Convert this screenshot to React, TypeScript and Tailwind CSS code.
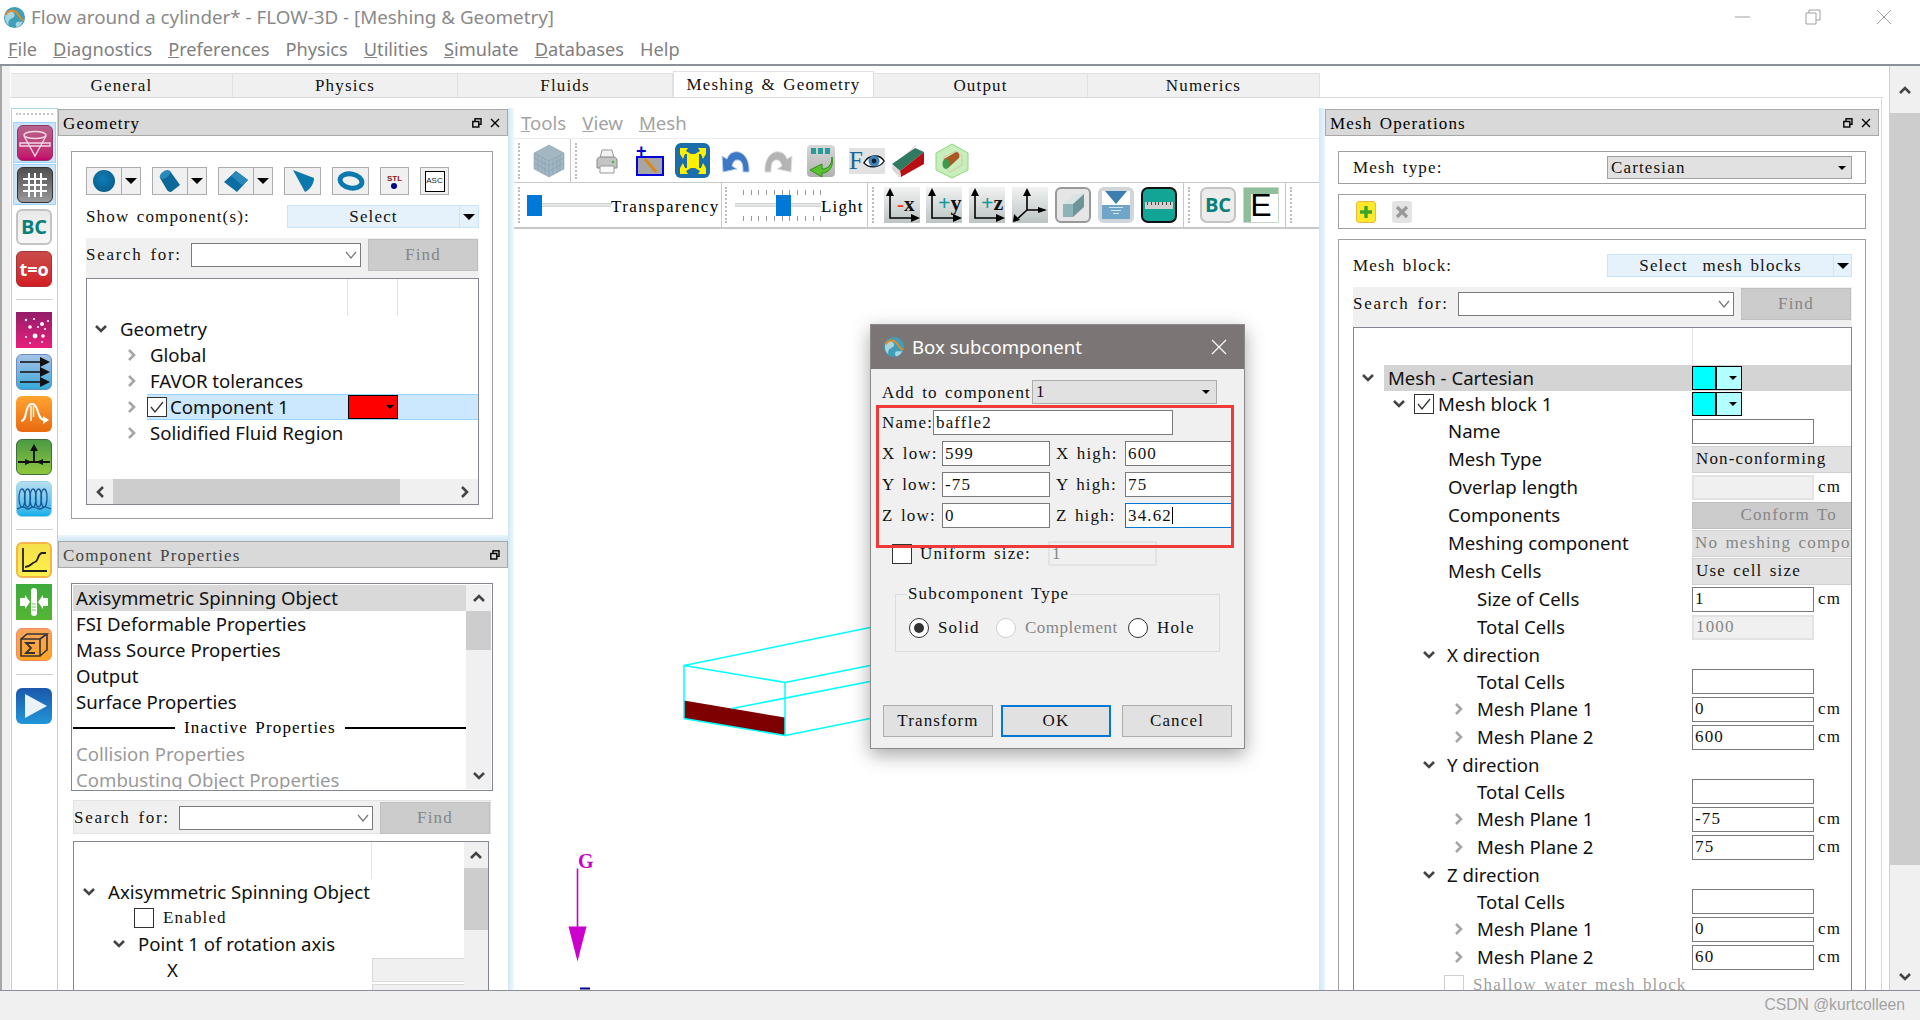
import React from "react";

const noto = "font-['Noto_Sans',sans-serif] text-[18.6px] tracking-normal [word-spacing:0]";
const badge = "font-['Open_Sans',sans-serif] font-bold tracking-normal leading-none";

const Logo = ({ size = 24 }: { size?: number }) => (
  <svg width={size} height={size} viewBox="0 0 24 24" className="shrink-0">
    <circle cx="12" cy="12" r="11" fill="#3f9fb8" />
    <path d="M3 8c3-3 6-3 8-1s1 5-2 6-4 4-3 7C3 18 1 13 3 8z" fill="#a8d5e0" />
    <path d="M14 17c3-1 6 0 7-1-1 3-4 6-7 6-1-2-1-4 0-5z" fill="#a8d5e0" />
    <path d="M3 9c4-6 10-5 13 0 1 2 3 5 6 6" fill="none" stroke="#e58a2c" strokeWidth="2" />
  </svg>
);

const Chev = ({ dir, light }: { dir: "down" | "right" | "up" | "left"; light?: boolean }) => {
  const points = {
    down: "2,4 7,9 12,4",
    up: "2,10 7,5 12,10",
    right: "4,2 9,7 4,12",
    left: "10,2 5,7 10,12",
  }[dir];
  return (
    <svg width="14" height="14" viewBox="0 0 14 14" className="shrink-0">
      <polyline points={points} fill="none" stroke={light ? "#a6a6a6" : "#444"} strokeWidth="2.6" />
    </svg>
  );
};

const Caret = ({ small }: { small?: boolean }) =>
  small ? (
    <span className="w-0 h-0 border-x-[4px] border-x-transparent border-t-[4px] border-t-black" />
  ) : (
    <span className="w-0 h-0 border-x-[6px] border-x-transparent border-t-[6px] border-t-black" />
  );

const ComboCheck = () => (
  <svg width="12" height="12" viewBox="0 0 12 12" className="shrink-0">
    <polyline points="1,3 6,9 11,3" fill="none" stroke="#777" strokeWidth="1.2" />
  </svg>
);

const DockIcon = () => (
  <svg width="10" height="10" viewBox="0 0 10 10">
    <rect x="3" y="0.8" width="6" height="5.5" fill="none" stroke="#000" strokeWidth="1.4" />
    <rect x="0.8" y="3.5" width="6" height="5.5" fill="#d9d9d9" stroke="#000" strokeWidth="1.4" />
  </svg>
);

const DockClose = () => (
  <svg width="10" height="10" viewBox="0 0 10 10">
    <path d="M1 1l8 8M9 1l-8 8" stroke="#000" strokeWidth="1.4" />
  </svg>
);

const DockTitle = ({ title, closable, dim }: { title: string; closable?: boolean; dim?: boolean }) => (
  <div className="h-[27px] flex items-center bg-[#d9d9d9] border border-[#a8a8a8] pl-[4px] shrink-0">
    <span className={`pt-[2px] ${dim ? "text-[#444]" : "text-black"}`}>{title}</span>
    <div className="ml-auto flex items-center gap-[8px] pr-[7px]">
      <DockIcon />
      {closable && <DockClose />}
    </div>
  </div>
);

const Check = ({ on, dim }: { on?: boolean; dim?: boolean }) => (
  <span
    className={`w-[20px] h-[20px] border flex items-center justify-center bg-white shrink-0 ${
      dim ? "border-[#cfcfcf]" : "border-[#333]"
    }`}
  >
    {on && (
      <svg width="14" height="14" viewBox="0 0 14 14">
        <polyline points="1,7 5,12 13,2" fill="none" stroke="#333" strokeWidth="1.3" />
      </svg>
    )}
  </span>
);

const SearchRow = ({ comboW, className }: { comboW: string; className: string }) => (
  <div className={`bg-[#f0f0f0] shrink-0 ${className}`}>
    <div className="h-[32px] flex items-center">
      <span className="shrink-0 w-[105px] whitespace-nowrap tracking-[1.7px]">Search for:</span>
      <div className={`h-[24px] bg-white border border-[#7a7a7a] flex items-center justify-end pr-[3px] shrink-0 ${comboW}`}>
        <ComboCheck />
      </div>
      <div className="ml-[7px] w-[110px] h-[32px] bg-[#cccccc] border border-[#bfbfbf] text-[#868686] flex items-center justify-center shrink-0">
        Find
      </div>
    </div>
  </div>
);

const SplitBtn = ({ children }: { children: React.ReactNode }) => (
  <div className="w-[55px] h-[28px] bg-[#f0f0f0] border border-[#adadad] flex items-center shrink-0">
    <div className="w-[35px] h-full flex items-center justify-center border-r border-[#adadad]">{children}</div>
    <div className="flex-1 flex items-center justify-center">
      <Caret />
    </div>
  </div>
);

const PlainBtn = ({ w, children }: { w: string; children: React.ReactNode }) => (
  <div className={`h-[28px] bg-[#f0f0f0] border border-[#adadad] flex items-center justify-center shrink-0 ${w}`}>{children}</div>
);

const Tile = ({ cls, children }: { cls: string; children?: React.ReactNode }) => (
  <div className={`w-[36px] h-[36px] rounded-[6px] flex items-center justify-center overflow-hidden shrink-0 ${cls}`}>{children}</div>
);

const Rail = () => (
  <div className="w-[47px] ml-px mt-[10px] border-x border-t border-[#a9d6e8] flex flex-col shrink-0 overflow-hidden">
    <div className="mt-[4px] mx-[4px] border-t-2 border-dotted border-[#c8c8c8]" />
    <div className="mt-[7px] ml-[1px] w-[43px] h-[41px] bg-[#cce4f7] border border-[#99d1ff] flex items-center justify-center">
      <Tile cls="bg-linear-to-b from-[#b4628c] to-[#c3006b] border border-[#8a3a68]">
        <svg width="32" height="30" viewBox="0 0 32 30" fill="none" stroke="#f4d8e6" strokeWidth="1.4">
          <ellipse cx="16" cy="7" rx="11" ry="3.5" />
          <path d="M5 8l11 20 11-20" />
          <path d="M1 15h30v3H1z" />
        </svg>
      </Tile>
    </div>
    <div className="mt-px ml-[1px] w-[43px] h-[41px] bg-[#cce4f7] border border-[#99d1ff] flex items-center justify-center">
      <Tile cls="bg-linear-to-b from-[#4f4f4f] to-[#9a9a9a] border border-[#333]">
        <svg width="30" height="30" viewBox="0 0 30 30" stroke="#fff" strokeWidth="2">
          <path d="M3 9h24M3 15h24M3 21h24M9 3v24M15 3v24M21 3v24" />
        </svg>
      </Tile>
    </div>
    <div className="mt-[4px] ml-[4px]">
      <Tile cls="bg-linear-to-b from-[#e9e9e9] to-[#f7f7f7] border-2 border-[#c4c4c4]">
        <span className={`${badge} text-[20px] text-[#0b7f7a]`}>BC</span>
      </Tile>
    </div>
    <div className="mt-[6px] ml-[4px]">
      <Tile cls="bg-linear-to-b from-[#c94a4a] to-[#d21c24] border border-[#a33]">
        <span className={`${badge} text-[18px] text-white`}>t=o</span>
      </Tile>
    </div>
    <div className="mt-[12px] mx-[4px] border-t border-[#d0d0d0]" />
    <div className="mt-[12px] ml-[4px]">
      <Tile cls="bg-linear-to-b from-[#931c68] to-[#ea1c7c] rounded-none">
        <svg width="32" height="32" viewBox="0 0 32 32" fill="#fff">
          <circle cx="8" cy="6" r="1.2" /><circle cx="16" cy="5" r="1" /><circle cx="24" cy="10" r="2" /><circle cx="30" cy="7" r="1" />
          <circle cx="12" cy="13" r="1.8" /><circle cx="20" cy="13" r="1" /><circle cx="27" cy="15" r="1" /><circle cx="8" cy="23" r="1" />
          <circle cx="17" cy="22" r="2.4" /><circle cx="25" cy="22" r="1.8" /><circle cx="12" cy="29" r="1" /><circle cx="24" cy="28" r="1" />
        </svg>
      </Tile>
    </div>
    <div className="mt-[6px] ml-[4px]">
      <Tile cls="bg-linear-to-b from-[#a3c2e6] to-[#2fa9da] border border-[#6a8cc0]">
        <svg width="34" height="32" viewBox="0 0 34 32" fill="#111" stroke="#111" strokeWidth="1.4">
          <path d="M3 6h22M3 16h22M3 26h22" />
          <path d="M23 1l10 5-10 5zM23 11l10 5-10 5zM23 21l10 5-10 5z" stroke="none" />
        </svg>
      </Tile>
    </div>
    <div className="mt-[6px] ml-[4px]">
      <Tile cls="bg-linear-to-b from-[#ffa42f] to-[#e8690f]">
        <svg width="32" height="32" viewBox="0 0 32 32" fill="none" stroke="#fff" strokeWidth="2">
          <path d="M3 23c5 0 4-7 6-12 1-3 3-5 5-5s4 2 5 5c2 5 2 10 7 11" />
          <path d="M13 8v15M15.5 8v11" strokeWidth="1.4" />
          <path d="M25 18l6 4-6 4z" fill="#fff" stroke="none" />
        </svg>
      </Tile>
    </div>
    <div className="mt-[7px] ml-[4px]">
      <Tile cls="bg-linear-to-b from-[#4a9a44] to-[#90c83c] border border-[#3d6f3b]">
        <svg width="34" height="30" viewBox="0 0 34 30" fill="#111" stroke="#111" strokeWidth="1.8">
          <path d="M1 20h32M17 6v14" />
          <path d="M13 9l4-7 4 7zM8 17l7 3-7 3zM26 17l-7 3 7 3z" stroke="none" />
        </svg>
      </Tile>
    </div>
    <div className="mt-[6px] ml-[4px]">
      <Tile cls="bg-linear-to-b from-[#b5dff0] to-[#00afe9] border border-[#9cd0e6]">
        <svg width="34" height="26" viewBox="0 0 34 26" fill="none" stroke="#175a94" strokeWidth="1.3">
          <ellipse cx="5" cy="12" rx="3" ry="9" />
          <ellipse cx="10.5" cy="12" rx="3" ry="9" />
          <ellipse cx="16" cy="12" rx="3" ry="9" />
          <ellipse cx="21.5" cy="12" rx="3" ry="9" />
          <ellipse cx="27" cy="12" rx="3" ry="9" />
          <path d="M0 23c3-1 3-1 5-2s4 2 6 2 4-3 6-2 4 2 6 2 4-3 6-2 3 1 5 2" />
        </svg>
      </Tile>
    </div>
    <div className="mt-[12px] mx-[4px] border-t border-[#d0d0d0]" />
    <div className="mt-[12px] ml-[4px]">
      <Tile cls="bg-linear-to-b from-[#f5e04a] to-[#fdf04a] border-2 border-[#f5b44a]">
        <svg width="30" height="30" viewBox="0 0 30 30" fill="none" stroke="#222" strokeWidth="1.8">
          <path d="M4 3v23h24" />
          <path d="M6 22c6 0 6-4 10-5s2-8 7-9h4" />
        </svg>
      </Tile>
    </div>
    <div className="mt-[6px] ml-[4px]">
      <Tile cls="bg-linear-to-b from-[#3dab3d] to-[#55b534] rounded-none">
        <svg width="32" height="32" viewBox="0 0 32 32" fill="#fff">
          <rect x="13" y="2" width="6" height="28" rx="3" />
          <path d="M2 12h5V9l5 7-5 7v-3H2zM30 12h-5V9l-5 7 5 7v-3h5z" />
          <path d="M14 18h4M14 21h4M14 24h4" stroke="#7cc46b" />
        </svg>
      </Tile>
    </div>
    <div className="mt-[8px] ml-[4px]">
      <Tile cls="bg-linear-to-b from-[#f7a45a] to-[#ffa51d] border border-[#f28a6a] !h-[33px]">
        <svg width="30" height="26" viewBox="0 0 30 26" fill="none" stroke="#333" strokeWidth="1.6">
          <path d="M2 7h19v17H2zM2 7l6-5h20l-7 5M21 24l7-6V2" />
          <path d="M16 11H7l5 5-5 5h9" strokeWidth="1.8" />
        </svg>
      </Tile>
    </div>
    <div className="mt-[13px] mx-[4px] border-t border-[#d0d0d0]" />
    <div className="mt-[13px] ml-[4px]">
      <Tile cls="bg-linear-to-b from-[#1c57ab] to-[#2296d9]">
        <svg width="30" height="30" viewBox="0 0 30 30" fill="#eaf2fa">
          <path d="M6 3l22 12L6 27z" />
        </svg>
      </Tile>
    </div>
  </div>
);

const Sphere = () => (
  <svg width="24" height="24" viewBox="0 0 24 24">
    <defs>
      <radialGradient id="sphereFill" cx="45%" cy="40%" r="60%">
        <stop offset="0%" stopColor="#0f7db5" />
        <stop offset="100%" stopColor="#0a5f8f" />
      </radialGradient>
    </defs>
    <circle cx="12" cy="12" r="11" fill="url(#sphereFill)" />
  </svg>
);

const GeoTools = () => (
  <div className="flex items-center h-[28px] shrink-0">
    <SplitBtn>
      <Sphere />
    </SplitBtn>
    <div className="ml-[11px]">
      <SplitBtn>
        <svg width="24" height="24" viewBox="0 0 24 24">
          <path d="M2 9l10-7 10 14-9 7c-2 0-3-1-4-2z" fill="#0b6899" />
          <ellipse cx="7" cy="5.5" rx="6" ry="3.4" transform="rotate(-35 7 5.5)" fill="#2a88ba" />
        </svg>
      </SplitBtn>
    </div>
    <div className="ml-[11px]">
      <SplitBtn>
        <svg width="26" height="24" viewBox="0 0 26 24">
          <path d="M1 13L13 2l12 9-11 12z" fill="#0a6ea3" />
          <path d="M8 7l5-5 12 9-6 5z" fill="#2a88ba" />
        </svg>
      </SplitBtn>
    </div>
    <div className="ml-[11px]">
      <PlainBtn w="w-[37px]">
        <svg width="24" height="24" viewBox="0 0 24 24">
          <path d="M2 1l21 8c0 5-3 11-9 14z" fill="#0a78ad" />
        </svg>
      </PlainBtn>
    </div>
    <div className="ml-[11px]">
      <PlainBtn w="w-[37px]">
        <svg width="28" height="20" viewBox="0 0 28 20" fill="none">
          <ellipse cx="14" cy="10" rx="11" ry="7" transform="rotate(10 14 10)" stroke="#0b79ae" strokeWidth="5" />
        </svg>
      </PlainBtn>
    </div>
    <div className="ml-[11px]">
      <PlainBtn w="w-[29px]">
        <div className="flex flex-col items-center leading-none tracking-normal font-['Liberation_Sans',sans-serif]">
          <span className="text-[8px] font-bold text-[#8b1a1a] leading-[9px]">STL</span>
          <span className="w-[6px] h-[6px] rounded-full bg-[#00008b]" />
        </div>
      </PlainBtn>
    </div>
    <div className="ml-[11px]">
      <PlainBtn w="w-[29px]">
        <div className="relative w-[20px] h-[21px] border border-black bg-white flex items-center justify-center tracking-normal font-['Liberation_Sans',sans-serif]">
          <span className="text-[8px] text-[#222] leading-none">ASC</span>
        </div>
      </PlainBtn>
    </div>
  </div>
);

const TreeRow = ({ pl, slot, chev, light, children }: { pl: string; slot: string; chev?: "down" | "right"; light?: boolean; children: React.ReactNode }) => (
  <div className={`h-[26px] flex items-center text-[#111] shrink-0 whitespace-nowrap ${noto} ${pl}`}>
    <span className={`flex items-center shrink-0 ${slot}`}>{chev && <Chev dir={chev} light={light} />}</span>
    {children}
  </div>
);

const GeometryPanel = () => (
  <div className="ml-[13px] mt-[15px] w-[422px] h-[368px] border border-[#a0a0a0] pl-[14px] pt-[15px] flex flex-col shrink-0">
    <GeoTools />
    <div className="mt-[10px] h-[23px] flex items-center w-[393px] shrink-0">
      <span className="w-[201px] shrink-0 pt-[1px] whitespace-nowrap">Show component(s):</span>
      <div className="flex-1 h-full bg-[#e5f1fb] border border-[#cce4f7] flex items-center">
        <span className="flex-1 text-center">Select</span>
        <span className="w-[19px] h-full border-l border-[#cce4f7] flex items-center justify-center">
          <Caret />
        </span>
      </div>
    </div>
    <SearchRow comboW="w-[170px]" className="mt-[10px] h-[40px] w-[393px] pt-[1px]" />
    <div className="w-[393px] h-[227px] border border-[#828790] flex flex-col shrink-0">
      <div className="h-[37px] ml-[260px] w-[51px] border-x border-[#e3e3e3] shrink-0" />
      <TreeRow pl="pl-[7px]" slot="w-[26px]" chev="down">Geometry</TreeRow>
      <TreeRow pl="pl-[38px]" slot="w-[25px]" chev="right" light>Global</TreeRow>
      <TreeRow pl="pl-[38px]" slot="w-[25px]" chev="right" light>FAVOR tolerances</TreeRow>
      <div className={`h-[26px] flex items-center text-[#111] pl-[38px] shrink-0 ${noto}`}>
        <span className="flex items-center w-[22px] shrink-0">
          <Chev dir="right" light />
        </span>
        <div className="flex-1 h-full bg-[#cce8ff] border-y border-[#99d1ff] flex items-center">
          <Check on />
          <span className="ml-[3px] w-[178px] shrink-0">Component 1</span>
          <div className="w-[50px] h-[24px] bg-[#ff0000] border border-black flex items-center justify-end pr-[3px]">
            <Caret small />
          </div>
        </div>
      </div>
      <TreeRow pl="pl-[38px]" slot="w-[25px]" chev="right" light>Solidified Fluid Region</TreeRow>
      <div className="mt-auto h-[25px] bg-[#f0f0f0] flex items-center shrink-0">
        <span className="w-[26px] flex justify-center">
          <Chev dir="left" />
        </span>
        <div className="w-[287px] h-full bg-[#cdcdcd]" />
        <span className="ml-auto w-[26px] flex justify-center">
          <Chev dir="right" />
        </span>
      </div>
    </div>
  </div>
);

const ListItem = ({ children, dim, on }: { children: React.ReactNode; dim?: boolean; on?: boolean }) => (
  <div
    className={`h-[26px] flex items-center pl-[3px] shrink-0 whitespace-nowrap ${noto} ${on ? "bg-[#d9d9d9]" : ""} ${
      dim ? "text-[#9a9a9a]" : "text-[#111]"
    }`}
  >
    {children}
  </div>
);

const ComponentPanel = () => (
  <>
    <div className="ml-[13px] mt-[15px] w-[422px] h-[208px] border border-[#828790] flex p-px shrink-0">
      <div className="w-[393px] flex flex-col overflow-hidden">
        <ListItem on>Axisymmetric Spinning Object</ListItem>
        <ListItem>FSI Deformable Properties</ListItem>
        <ListItem>Mass Source Properties</ListItem>
        <ListItem>Output</ListItem>
        <ListItem>Surface Properties</ListItem>
        <div className="h-[26px] flex items-center shrink-0">
          <div className="w-[102px] border-t-2 border-black" />
          <span className="mx-[9px] text-black whitespace-nowrap">Inactive Properties</span>
          <div className="flex-1 border-t-2 border-black" />
        </div>
        <ListItem dim>Collision Properties</ListItem>
        <ListItem dim>Combusting Object Properties</ListItem>
      </div>
      <div className="flex-1 bg-[#f0f0f0] flex flex-col items-center">
        <span className="h-[26px] flex items-center">
          <Chev dir="up" />
        </span>
        <div className="w-full h-[39px] bg-[#cdcdcd]" />
        <span className="mt-auto h-[26px] flex items-center">
          <Chev dir="down" />
        </span>
      </div>
    </div>
    <SearchRow comboW="w-[194px]" className="ml-[15px] mt-[9px] h-[34px] w-[418px] border border-[#e3e3e3] pt-[1px]" />
    <div className="ml-[15px] mt-[7px] w-[416px] flex-1 min-h-0 border-x border-t border-[#828790] flex overflow-hidden">
      <div className="w-[390px] flex flex-col">
        <div className="h-[37px] ml-[297px] w-px bg-[#e3e3e3] shrink-0" />
        <TreeRow pl="pl-[8px]" slot="w-[26px]" chev="down">Axisymmetric Spinning Object</TreeRow>
        <div className="h-[26px] flex items-center pl-[60px] gap-[9px] shrink-0">
          <Check />
          <span>Enabled</span>
        </div>
        <TreeRow pl="pl-[38px]" slot="w-[26px]" chev="down">Point 1 of rotation axis</TreeRow>
        <div className={`h-[26px] flex items-center text-[#111] pl-[93px] shrink-0 ${noto}`}>
          <span className="w-[205px]">X</span>
          <div className="w-[92px] h-[24px] bg-[#f0f0f0] border border-[#d9d9d9] border-r-0" />
        </div>
        <div className="h-[26px] flex items-center pl-[298px] shrink-0">
          <div className="w-[92px] h-[24px] bg-[#f0f0f0] border border-[#d9d9d9] border-r-0" />
        </div>
      </div>
      <div className="flex-1 bg-[#f0f0f0] flex flex-col items-center">
        <span className="h-[26px] flex items-center">
          <Chev dir="up" />
        </span>
        <div className="w-full h-[62px] bg-[#cdcdcd]" />
      </div>
    </div>
  </>
);

const LeftDock = () => (
  <div className="w-[450px] mt-[11px] flex flex-col shrink-0 min-h-0">
    <DockTitle title="Geometry" closable />
    <GeometryPanel />
    <div className="h-[22px] flex flex-col justify-end shrink-0">
      <div className="h-[6px] bg-linear-to-b from-[#eaf5fb] to-[#cfe8f4]" />
    </div>
    <DockTitle title="Component Properties" dim />
    <ComponentPanel />
  </div>
);

const Grip = ({ cls }: { cls: string }) => <span className={`h-[36px] border-l-2 border-dotted border-[#bdbdbd] shrink-0 ${cls}`} />;
const Sep = ({ cls }: { cls: string }) => <span className={`self-stretch w-px bg-[#c8c8c8] shrink-0 ${cls}`} />;

const ToolbarTop = () => (
  <div className="h-[45px] flex items-center border-t border-[#ececec] border-b border-b-[#c8c8c8] shrink-0">
    <Grip cls="ml-[4px]" />
    <svg width="32" height="34" viewBox="0 0 32 34" className="ml-[13px] shrink-0" stroke="#7f9aac" strokeWidth="0.5">
      <path d="M16 1l15 8v16l-15 8-15-8V9z" fill="#a3b6c2" />
      <path d="M1 9l15 8 15-8M16 17v16M5 11v16M9 13v16M12 15v16M20 15v16M24 13v16M27 11v16M1 14l15 8 15-8M1 19l15 8 15-8" fill="none" />
    </svg>
    <Sep cls="ml-[5px]" />
    <Grip cls="ml-[4px]" />
    <svg width="26" height="26" viewBox="0 0 26 26" className="ml-[17px] shrink-0">
      <path d="M8 2h10l2 8H6z" fill="#f2f2f2" stroke="#999" />
      <path d="M3 12c0-2 2-3 4-3h12c2 0 4 1 4 3v8H3z" fill="#c4c4c4" stroke="#888" />
      <path d="M6 18h14v7H6z" fill="#fafafa" stroke="#999" />
      <circle cx="19" cy="14" r="1.3" fill="#4caf50" />
    </svg>
    <div className="ml-[16px] w-[28px] h-[30px] flex flex-col shrink-0">
      <span className="h-[11px] text-[#0000d0] text-[18px] font-bold leading-[10px] tracking-normal font-['Liberation_Sans',sans-serif]">+</span>
      <div className="flex-1 bg-[#a6a6a6] border-2 border-[#0000e0] flex items-center justify-center">
        <svg width="18" height="16" viewBox="0 0 18 16">
          <path d="M4 1l11 13" stroke="#d98a1e" strokeWidth="3" />
        </svg>
      </div>
    </div>
    <div className="ml-[11px] w-[35px] h-[35px] rounded-[6px] bg-[#1b6dab] flex items-center justify-center shrink-0">
      <svg width="30" height="30" viewBox="0 0 30 30">
        <path d="M9 8h12v14H9z" fill="#ffef00" />
        <path d="M2 2h8l-2 3 5 3H7L5 13 2 8zM28 2h-8l2 3-5 3h6l2 5 3-5zM2 28h8l-2-3 5-3H7l-2-5-3 5zM28 28h-8l2-3-5-3h6l2-5 3 5z" fill="#ffef00" />
      </svg>
    </div>
    <svg width="32" height="26" viewBox="0 0 32 26" className="ml-[10px] shrink-0">
      <path d="M29 24C30 10 22 2 14 4 10 5 8 8 7 11L2 8l1 16 14-3-5-3c1-3 2-6 5-6 5 0 6 4 6 12z" fill="#3d78c4" stroke="#bcd0ea" />
    </svg>
    <svg width="32" height="26" viewBox="0 0 32 26" className="ml-[10px] shrink-0">
      <path d="M3 24C2 10 10 2 18 4c4 1 6 4 7 7l5-3-1 16-14-3 5-3c-1-3-2-6-5-6-5 0-6 4-6 12z" fill="#b4b4b4" stroke="#e0e0e0" />
    </svg>
    <div className="ml-[13px] w-[28px] h-[32px] rounded-[4px] bg-linear-to-b from-[#d8d8d8] to-[#b0b0b0] relative shrink-0">
      <div className="pt-[3px] pl-[4px] flex gap-[2px]">
        <span className="w-[5px] h-[6px] bg-[#2a9a9a]" />
        <span className="w-[5px] h-[6px] bg-[#2a9a9a]" />
        <span className="w-[5px] h-[6px] bg-[#2a9a9a]" />
      </div>
      <svg width="28" height="22" viewBox="0 0 28 22" className="absolute left-0 bottom-0">
        <path d="M25 2c0 9-5 12-10 12v-5L3 15l12 7v-4c7 0 12-6 10-16z" fill="#58c22e" stroke="#2f8f1a" />
      </svg>
    </div>
    <div className="ml-[14px] w-[36px] h-[26px] flex items-center bg-[#e2e2e2] shrink-0">
      <span className="font-['Liberation_Serif',serif] text-[25px] leading-none tracking-normal text-[#14699a]">F</span>
      <svg width="24" height="20" viewBox="0 0 24 20">
        <path d="M1 12C6 3 18 2 23 10 18 18 6 18 1 12z" fill="#fff" stroke="#111" strokeWidth="1.5" />
        <circle cx="12" cy="10" r="6" fill="#3f83b8" />
        <circle cx="12" cy="10" r="2.6" fill="#0c2030" />
      </svg>
    </div>
    <svg width="36" height="34" viewBox="0 0 36 34" className="ml-[5px] shrink-0">
      <path d="M26 1L2 24l7 9 25-21" fill="none" stroke="#f2a8a8" strokeWidth="0.6" />
      <path d="M2 20L25 4l9 4L10 27z" fill="#2f7a60" />
      <path d="M10 27L34 8v12L11 33z" fill="#b80f14" />
      <path d="M2 20l8 7 1 6-8-6z" fill="#d8d8d8" />
    </svg>
    <svg width="36" height="36" viewBox="0 0 36 36" className="ml-[8px] shrink-0">
      <path d="M18 1l16 9v17l-16 8-16-8V10z" fill="#c6efbc" stroke="#8fd580" />
      <path d="M10 14l12-6 6 5v9l-12 7-6-5z" fill="none" stroke="#f0a0a0" strokeWidth="0.6" />
      <path d="M10 16l12-7c3 0 4 3 3 6L14 25c-3 1-5-6-4-9z" fill="#a85a22" />
      <ellipse cx="12" cy="21" rx="3.5" ry="5" fill="#3c9a50" />
    </svg>
  </div>
);

const Axis = ({ cls, children }: { cls: string; children?: React.ReactNode }) => (
  <div className={`w-[36px] h-[36px] bg-linear-to-b from-[#f2f2f2] to-[#bcc4c4] relative shrink-0 tracking-normal ${cls}`}>
    <svg width="36" height="36" viewBox="0 0 36 36" className="absolute inset-0">
      <path d="M6 4v27h24" fill="none" stroke="#000" strokeWidth="1.6" />
      <path d="M2 9l4-8 4 8zM27 27l9 4-9 4z" fill="#000" />
    </svg>
    {children}
  </div>
);

const TickRow = () => (
  <div className="flex gap-[7px] pl-[8px] h-[5px] shrink-0">
    {[0, 1, 2, 3, 4, 5, 6, 7, 8, 9, 10].map((n) => (
      <span key={n} className="w-px h-full bg-[#999]" />
    ))}
  </div>
);

const ToolbarBottom = () => (
  <div className="h-[46px] flex items-center border-b-2 border-[#c8c8c8] shrink-0">
    <Grip cls="ml-[4px]" />
    <div className="ml-[7px] w-[84px] h-[21px] flex items-center shrink-0">
      <span className="w-[15px] h-[21px] bg-[#0078d7] shrink-0" />
      <span className="flex-1 h-[4px] bg-[#e3e6e6] border-y border-[#d4d4d4]" />
    </div>
    <span className="whitespace-nowrap w-[110px] pt-[3px] text-black tracking-[1.4px] shrink-0">Transparency</span>
    <Sep cls="" />
    <Grip cls="ml-[3px]" />
    <div className="ml-[8px] w-[86px] h-[31px] flex flex-col justify-between shrink-0">
      <TickRow />
      <div className="flex items-center h-[21px] -my-[5px] relative">
        <span className="w-full h-[4px] bg-[#e3e6e6] border-y border-[#d4d4d4]" />
        <span className="absolute left-[41px] w-[15px] h-[21px] bg-[#0078d7]" />
      </div>
      <TickRow />
    </div>
    <span className="text-black whitespace-nowrap w-[46px] pt-[3px] shrink-0">Light</span>
    <Sep cls="" />
    <Grip cls="ml-[4px]" />
    <Axis cls="ml-[10px]">
      <span className="absolute left-[13px] top-[7px] font-['Liberation_Serif',serif] font-bold text-[21px] leading-none whitespace-nowrap">
        <span className="text-[#ff3b14]">-</span>x
      </span>
    </Axis>
    <Axis cls="ml-[6px]">
      <span className="absolute left-[12px] top-[5px] font-['Liberation_Serif',serif] font-bold text-[22px] leading-none whitespace-nowrap">
        <span className="text-[#0f9a9a]">+</span>y
      </span>
    </Axis>
    <Axis cls="ml-[7px]">
      <span className="absolute left-[12px] top-[5px] font-['Liberation_Serif',serif] font-bold text-[22px] leading-none whitespace-nowrap">
        <span className="text-[#0f9a9a]">+</span>z
      </span>
    </Axis>
    <div className="ml-[7px] w-[36px] h-[36px] bg-linear-to-b from-[#f2f2f2] to-[#bcc4c4] shrink-0">
      <svg width="36" height="36" viewBox="0 0 36 36">
        <path d="M15 6v17l18 0M15 23L3 34" fill="none" stroke="#000" strokeWidth="1.6" />
        <path d="M11 9l4-8 4 8zM26 20l9 3-9 3zM2 27l-1 8 7-2z" fill="#000" />
      </svg>
    </div>
    <div className="ml-[7px] w-[36px] h-[36px] rounded-[6px] bg-[#e6e6e6] border-2 border-[#999] flex items-center justify-center shrink-0">
      <svg width="28" height="28" viewBox="0 0 28 28">
        <path d="M4 13L15 3h10L14 13z" fill="#d8e4e4" />
        <path d="M14 13L25 3v13L14 26z" fill="#6f9498" />
        <path d="M4 13h10v13H4z" fill="#8fb4b8" />
      </svg>
    </div>
    <div className="ml-[7px] w-[36px] h-[36px] rounded-[6px] bg-[#cfd5d9] flex items-center justify-center shrink-0">
      <div className="w-[28px] h-[28px] bg-white flex flex-col items-center">
        <span className="w-0 h-0 border-x-[11px] border-x-transparent border-t-[13px] border-t-[#3a7fb0]" />
        <div className="mt-px w-full flex-1 bg-[#6fa5c8] flex flex-col items-center gap-[2px] pt-[2px]">
          <span className="w-[14px] h-px bg-[#d5e5f0]" />
          <span className="w-[10px] h-px bg-[#d5e5f0]" />
          <span className="w-[6px] h-px bg-[#d5e5f0]" />
        </div>
      </div>
    </div>
    <div className="ml-[7px] w-[36px] h-[36px] rounded-[7px] bg-[#12a596] border-2 border-[#111] flex items-center justify-center shrink-0">
      <div className="w-[28px] h-[7px] bg-[#d0d0d0] flex items-start justify-between px-[2px]">
        {[0, 1, 2, 3, 4, 5, 6].map((n) => (
          <span key={n} className="w-px h-[3px] bg-[#444]" />
        ))}
      </div>
    </div>
    <Sep cls="ml-[6px]" />
    <Grip cls="ml-[4px]" />
    <div className="ml-[10px] w-[36px] h-[36px] rounded-[7px] bg-[#ececec] border-2 border-[#c4c4c4] flex items-center justify-center shrink-0">
      <span className={`${badge} text-[20px] text-[#0b7f7a]`}>BC</span>
    </div>
    <div className="ml-[7px] w-[36px] h-[36px] bg-white border border-[#c8d8c8] relative shrink-0 flex items-center justify-center">
      <span className="absolute left-0 top-0 w-[7px] h-full bg-[#8fbf9a]" />
      <span className="absolute left-0 top-0 w-full h-[6px] bg-[#8fbf9a]" />
      <span className="relative font-['Liberation_Sans',sans-serif] text-[32px] leading-none tracking-normal text-black">E</span>
    </div>
    <Sep cls="ml-[6px]" />
    <Grip cls="ml-[4px]" />
  </div>
);

const Center = () => (
  <div className="w-[805px] flex flex-col shrink-0 min-h-0">
    <div className={`h-[40px] flex items-center gap-[16px] pl-[7px] pt-[9px] text-[#a3a3a3] shrink-0 ${noto}`}>
      <span><span className="underline">T</span>ools</span>
      <span><span className="underline">V</span>iew</span>
      <span><span className="underline">M</span>esh</span>
    </div>
    <ToolbarTop />
    <ToolbarBottom />
    <div className="relative flex-1 min-h-0 overflow-hidden">
      <svg viewBox="514 230 805 760" className="absolute inset-0 w-full h-full">
        <polygon points="684,701 785,718 785,736 684,719" fill="#7f0000" />
        <g fill="none" stroke="#00ffff" strokeWidth="1.5">
          <path d="M684 666L785 683L785 736L684 719ZM684 666L880 626M785 683L880 664M785 736L880 717M732 709L880 680" />
        </g>
        <path d="M577.5 869V930" stroke="#cc00cc" strokeWidth="1.6" />
        <path d="M568.5 927H586.5L577.5 962Z" fill="#cc00cc" />
        <text x="578" y="868" fontFamily="Liberation Serif, serif" fontWeight="700" fontSize="20" fill="#cc00cc">G</text>
        <rect x="580" y="988" width="10" height="2" fill="#00008b" />
      </svg>
    </div>
  </div>
);

type Kind = "input" | "input-cm" | "off-cm" | "off" | "bar" | "dimbar" | "btn" | "none";

interface Row {
  label: string;
  h: string;
  pl: string;
  slot?: "down" | "right";
  kind: Kind;
  value?: string;
}

const meshRows: Row[] = [
  { label: "Name", h: "h-[28px]", pl: "pl-[94px]", kind: "input" },
  { label: "Mesh Type", h: "h-[28px]", pl: "pl-[94px]", kind: "bar", value: "Non-conforming" },
  { label: "Overlap length", h: "h-[28px]", pl: "pl-[94px]", kind: "off-cm" },
  { label: "Components", h: "h-[28px]", pl: "pl-[94px]", kind: "btn", value: "Conform To" },
  { label: "Meshing component", h: "h-[28px]", pl: "pl-[94px]", kind: "dimbar", value: "No meshing component" },
  { label: "Mesh Cells", h: "h-[28px]", pl: "pl-[94px]", kind: "bar", value: "Use cell size" },
  { label: "Size of Cells", h: "h-[28px]", pl: "pl-[123px]", kind: "input-cm", value: "1" },
  { label: "Total Cells", h: "h-[28px]", pl: "pl-[123px]", kind: "off", value: "1000" },
  { label: "X direction", h: "h-[27px]", pl: "pl-[68px]", slot: "down", kind: "none" },
  { label: "Total Cells", h: "h-[27px]", pl: "pl-[123px]", kind: "input" },
  { label: "Mesh Plane 1", h: "h-[28px]", pl: "pl-[98px]", slot: "right", kind: "input-cm", value: "0" },
  { label: "Mesh Plane 2", h: "h-[28px]", pl: "pl-[98px]", slot: "right", kind: "input-cm", value: "600" },
  { label: "Y direction", h: "h-[27px]", pl: "pl-[68px]", slot: "down", kind: "none" },
  { label: "Total Cells", h: "h-[27px]", pl: "pl-[123px]", kind: "input" },
  { label: "Mesh Plane 1", h: "h-[28px]", pl: "pl-[98px]", slot: "right", kind: "input-cm", value: "-75" },
  { label: "Mesh Plane 2", h: "h-[28px]", pl: "pl-[98px]", slot: "right", kind: "input-cm", value: "75" },
  { label: "Z direction", h: "h-[27px]", pl: "pl-[68px]", slot: "down", kind: "none" },
  { label: "Total Cells", h: "h-[27px]", pl: "pl-[123px]", kind: "input" },
  { label: "Mesh Plane 1", h: "h-[28px]", pl: "pl-[98px]", slot: "right", kind: "input-cm", value: "0" },
  { label: "Mesh Plane 2", h: "h-[28px]", pl: "pl-[98px]", slot: "right", kind: "input-cm", value: "60" },
];

const MeshValue = ({ row }: { row: Row }) => {
  switch (row.kind) {
    case "input":
      return <div className="w-[122px] h-[25px] bg-white border border-[#7a7a7a]" />;
    case "input-cm":
      return (
        <>
          <div className="w-[122px] h-[25px] bg-white border border-[#7a7a7a] flex items-center pl-[2px]">{row.value}</div>
          <span className="ml-[4px]">cm</span>
        </>
      );
    case "off-cm":
      return (
        <>
          <div className="w-[122px] h-[25px] bg-[#f0f0f0] border-2 border-[#e3e3e3]" />
          <span className="ml-[4px]">cm</span>
        </>
      );
    case "off":
      return <div className="w-[122px] h-[25px] bg-[#f0f0f0] border-2 border-[#e3e3e3] flex items-center pl-[2px] text-[#868686]">{row.value}</div>;
    case "bar":
      return <div className="w-full h-[27px] bg-[#e1e1e1] border border-[#d0d0d0] border-r-0 flex items-center pl-[3px] whitespace-nowrap overflow-hidden">{row.value}</div>;
    case "dimbar":
      return <div className="w-full h-[27px] bg-[#e1e1e1] border-y border-[#d0d0d0] flex items-center pl-[3px] text-[#868686] whitespace-nowrap overflow-hidden">{row.value}</div>;
    case "btn":
      return <div className="w-full h-[27px] bg-[#cccccc] border border-[#bfbfbf] border-r-0 flex items-center justify-end pr-[14px] text-[#868686]">{row.value}</div>;
    default:
      return null;
  }
};

const Swatch = () => (
  <div className="w-[50px] h-[24px] border border-black flex shrink-0">
    <span className="w-[24px] bg-[#00ffff] border-r-2 border-black" />
    <span className="flex-1 bg-[#b3ffff] flex items-center justify-end pr-[4px]">
      <Caret small />
    </span>
  </div>
);

const MeshTree = () => (
  <div className="flex-1 min-h-0 w-[499px] border-x border-t border-[#828790] flex flex-col overflow-hidden">
    <div className="h-[37px] ml-[338px] w-px bg-[#e3e3e3] shrink-0" />
    <div className={`h-[26px] flex items-center text-[#111] shrink-0 ${noto}`}>
      <span className="w-[30px] pl-[7px] shrink-0 flex items-center">
        <Chev dir="down" />
      </span>
      <div className="flex-1 h-full bg-[#d4d4d4] flex items-center">
        <span className="w-[308px] pl-[4px] shrink-0">Mesh - Cartesian</span>
        <Swatch />
      </div>
    </div>
    <div className={`h-[26px] flex items-center text-[#111] pl-[38px] shrink-0 ${noto}`}>
      <span className="w-[22px] shrink-0 flex items-center">
        <Chev dir="down" />
      </span>
      <Check on />
      <span className="ml-[4px] w-[254px] shrink-0">Mesh block 1</span>
      <Swatch />
    </div>
    {meshRows.map((row, i) => (
      <div key={i} className={`flex items-center shrink-0 ${row.h}`}>
        <div className={`w-[338px] flex items-center text-[#111] whitespace-nowrap shrink-0 ${noto} ${row.pl}`}>
          {row.slot && (
            <span className="w-[25px] flex items-center shrink-0">
              <Chev dir={row.slot} light={row.slot === "right"} />
            </span>
          )}
          {row.label}
        </div>
        <div className="flex-1 min-w-0 flex items-center">
          <MeshValue row={row} />
        </div>
      </div>
    ))}
    <div className="h-[28px] flex items-center pl-[90px] gap-[9px] text-[#a0a0a0] shrink-0 whitespace-nowrap">
      <Check dim />
      <span>Shallow water mesh block</span>
    </div>
  </div>
);

const RightDock = () => (
  <div className="w-[563px] flex shrink-0 min-h-0 border-r border-[#d9d9d9]">
    <div className="w-[6px] mt-[10px] bg-linear-to-r from-[#cfe8f4] to-[#eaf5fb] shrink-0" />
    <div className="flex-1 flex flex-col mt-[11px] min-h-0">
      <div className="mr-[2px]">
        <DockTitle title="Mesh Operations" closable />
      </div>
      <div className="ml-[13px] mt-[15px] w-[528px] h-[33px] border border-[#a0a0a0] flex items-center pl-[14px] shrink-0">
        <span className="w-[254px] shrink-0 pt-[1px]">Mesh type:</span>
        <div className="w-[245px] h-[23px] bg-[#e1e1e1] border border-[#a0a0a0] flex items-center pl-[3px]">
          Cartesian
          <span className="ml-auto mr-[5px] flex">
            <Caret small />
          </span>
        </div>
      </div>
      <div className="ml-[13px] mt-[10px] w-[528px] h-[35px] border border-[#a0a0a0] flex items-center pl-[17px] gap-[16px] shrink-0">
        <div className="w-[20px] h-[22px] rounded-[3px] bg-[#ffe92a] border border-[#f0b840] flex items-center justify-center">
          <svg width="14" height="14" viewBox="0 0 14 14">
            <path d="M7 1v12M1 7h12" stroke="#3aa52a" strokeWidth="3.4" />
          </svg>
        </div>
        <div className="w-[20px] h-[22px] rounded-[3px] bg-[#e3e3e3] flex items-center justify-center">
          <svg width="14" height="14" viewBox="0 0 14 14">
            <path d="M2 2l10 10M12 2L2 12" stroke="#999" strokeWidth="3.2" />
          </svg>
        </div>
      </div>
      <div className="ml-[13px] mt-[10px] w-[528px] flex-1 min-h-0 border-x border-t border-[#a0a0a0] pl-[14px] pt-[14px] flex flex-col">
        <div className="h-[23px] flex items-center w-[499px] shrink-0">
          <span className="w-[254px] shrink-0 pt-[1px]">Mesh block:</span>
          <div className="flex-1 h-full bg-[#e5f1fb] border border-[#cce4f7] flex items-center">
            <span className="flex-1 text-center whitespace-pre">Select  mesh blocks</span>
            <span className="w-[18px] h-full border-l border-[#cce4f7] flex items-center justify-center">
              <Caret />
            </span>
          </div>
        </div>
        <SearchRow comboW="w-[276px]" className="mt-[10px] h-[40px] w-[499px] pt-[1px]" />
        <MeshTree />
      </div>
    </div>
  </div>
);

const DialogInput = ({ value, w, blue, caret, clip }: { value: string; w: string; blue?: boolean; caret?: boolean; clip?: boolean }) => (
  <div
    className={`h-[25px] bg-white border flex items-center pl-[2px] shrink-0 ${w} ${blue ? "border-[#0078d7]" : "border-[#7a7a7a]"} ${
      clip ? "border-r-0" : ""
    }`}
  >
    {value}
    {caret && <span className="w-px h-[17px] bg-black" />}
  </div>
);

const BoundsRow = ({ axis, low, high, focus }: { axis: string; low: string; high: string; focus?: boolean }) => (
  <div className="mt-[6px] h-[25px] flex items-center pl-[11px] shrink-0">
    <span className="w-[60px] shrink-0 whitespace-nowrap">{axis} low:</span>
    <DialogInput value={low} w="w-[108px]" />
    <span className="ml-[6px] w-[69px] shrink-0 whitespace-nowrap">{axis} high:</span>
    <DialogInput value={high} w="w-[107px]" blue={focus} caret={focus} clip />
  </div>
);

const Radio = ({ on, dim }: { on?: boolean; dim?: boolean }) => (
  <span className={`w-[20px] h-[20px] rounded-full bg-white border flex items-center justify-center shrink-0 ${dim ? "border-[#cfcfcf]" : "border-[#333]"}`}>
    {on && <span className="w-[10px] h-[10px] rounded-full bg-[#333]" />}
  </span>
);

const DialogBtn = ({ label, active, cls }: { label: string; active?: boolean; cls: string }) => (
  <div className={`w-[110px] h-[32px] bg-[#e1e1e1] flex items-center justify-center shrink-0 ${active ? "border-2 border-[#0078d7]" : "border border-[#adadad]"} ${cls}`}>
    {label}
  </div>
);

const BoxDialog = () => (
  <div className="absolute left-[870px] top-[324px] w-[375px] h-[425px] bg-[#f0f0f0] border border-[#8a8a8a] shadow-[0_6px_18px_rgba(0,0,0,0.35)] flex flex-col">
    <div className="h-[44px] bg-[#7b7575] flex items-center pl-[12px] shrink-0">
      <Logo size={22} />
      <span className={`ml-[7px] text-white ${noto}`}>Box subcomponent</span>
      <svg width="16" height="16" viewBox="0 0 16 16" className="ml-auto mr-[17px]">
        <path d="M1 1l14 14M15 1L1 15" stroke="#fff" strokeWidth="1.2" />
      </svg>
    </div>
    <div className="mt-[11px] h-[24px] flex items-center pl-[11px] shrink-0">
      <span className="w-[150px] shrink-0 pt-[2px] whitespace-nowrap">Add to component</span>
      <div className="w-[185px] h-full bg-[#e1e1e1] border border-[#adadad] flex items-center pl-[3px]">
        1
        <span className="ml-auto mr-[6px] flex">
          <Caret small />
        </span>
      </div>
    </div>
    <div className="mt-[6px] h-[25px] flex items-center pl-[11px] shrink-0">
      <span className="w-[51px] shrink-0">Name:</span>
      <DialogInput value="baffle2" w="w-[240px]" />
    </div>
    <BoundsRow axis="X" low="599" high="600" />
    <BoundsRow axis="Y" low="-75" high="75" />
    <BoundsRow axis="Z" low="0" high="34.62" focus />
    <div className="mt-[13px] h-[25px] flex items-center pl-[21px] shrink-0">
      <Check />
      <span className="ml-[8px] w-[128px] shrink-0 whitespace-nowrap">Uniform size:</span>
      <div className="w-[109px] h-[25px] bg-[#f0f0f0] border-2 border-[#e3e3e3] flex items-center pl-[2px] text-[#868686]">1</div>
    </div>
    <fieldset className="ml-[24px] mt-[19px] w-[325px] h-[67px] border border-[#dcdcdc] shrink-0">
      <legend className="ml-[11px] px-[1px] leading-[18px]">Subcomponent Type</legend>
      <div className="h-[50px] flex items-center pl-[13px]">
        <Radio on />
        <span className="ml-[9px] w-[58px] shrink-0">Solid</span>
        <Radio dim />
        <span className="ml-[9px] w-[103px] shrink-0 tracking-[0.5px] text-[#868686]">Complement</span>
        <Radio />
        <span className="ml-[9px]">Hole</span>
      </div>
    </fieldset>
    <div className="mt-[53px] flex pl-[12px] shrink-0">
      <DialogBtn label="Transform" cls="" />
      <DialogBtn label="OK" active cls="ml-[8px]" />
      <DialogBtn label="Cancel" cls="ml-[11px]" />
    </div>
    <div className="absolute left-[5px] top-[80px] w-[358px] h-[143px] border-[3px] border-[#f03a3a] pointer-events-none" />
  </div>
);

const tabs = [
  { label: "General", w: "w-[222px]" },
  { label: "Physics", w: "w-[225px]" },
  { label: "Fluids", w: "w-[215px]" },
  { label: "Meshing & Geometry", w: "w-[201px]", on: true },
  { label: "Output", w: "w-[214px]" },
  { label: "Numerics", w: "w-[232px]" },
];

export default function App() {
  return (
    <div className="relative w-[1920px] h-[1020px] bg-white flex flex-col overflow-hidden font-['Liberation_Serif',serif] text-[17px] tracking-[1.15px] [word-spacing:2px] text-[#111]">
      <div className="h-[33px] flex items-center pl-[3px] pt-[1px] shrink-0 font-['Noto_Sans',sans-serif] text-[18.8px] tracking-normal [word-spacing:0] text-[#8a8a8a]">
        <Logo size={23} />
        <span className="ml-[5px]">Flow around a cylinder* - FLOW-3D - [Meshing &amp; Geometry]</span>
        <div className="ml-auto flex items-center">
          <svg width="16" height="16" viewBox="0 0 16 16">
            <path d="M0 8h15" stroke="#a0a0a0" />
          </svg>
          <svg width="16" height="16" viewBox="0 0 16 16" className="ml-[54px]">
            <path d="M1 4h10v11H1zM4 4V1h11v10h-4" fill="none" stroke="#a0a0a0" />
          </svg>
          <svg width="16" height="16" viewBox="0 0 16 16" className="ml-[55px] mr-[28px]">
            <path d="M1 1l14 14M15 1L1 15" stroke="#a0a0a0" />
          </svg>
        </div>
      </div>
      <div className="h-[31px] flex items-center gap-[16px] pl-[8px] pt-[2px] shrink-0 font-['Noto_Sans',sans-serif] text-[18.2px] tracking-normal [word-spacing:0] text-[#808080]">
        <span><span className="underline">F</span>ile</span>
        <span><span className="underline">D</span>iagnostics</span>
        <span><span className="underline">P</span>references</span>
        <span>Physics</span>
        <span><span className="underline">U</span>tilities</span>
        <span><span className="underline">S</span>imulate</span>
        <span><span className="underline">D</span>atabases</span>
        <span>Help</span>
      </div>
      <div className="flex-1 min-h-0 flex border-t-2 border-[#8d9298] border-b border-b-[#8a8f96]">
        <div className="w-[10px] bg-[#f0f0f0] border-l-2 border-[#a6a6a6] shrink-0" />
        <div className="w-[1873px] flex flex-col min-h-0 shrink-0">
          <div className="h-[7px] shrink-0" />
          <div className="flex h-[24px] ml-px items-end shrink-0">
            {tabs.map((t) => (
              <div
                key={t.label}
                className={`flex items-center justify-center shrink-0 whitespace-nowrap border-[#e0e0e0] ${t.w} ${
                  t.on ? "h-[26px] -mt-[2px] bg-white border-x border-t" : "h-[24px] bg-[#f0f0f0] border-t border-r"
                }`}
              >
                {t.label}
              </div>
            ))}
          </div>
          <div className="flex-1 min-h-0 flex border-t border-[#d9d9d9]">
            <Rail />
            <LeftDock />
            <div className="w-[6px] mt-[10px] bg-linear-to-r from-[#cfe8f4] to-[#f2f9fc] shrink-0" />
            <Center />
            <RightDock />
          </div>
        </div>
        <div className="w-[7px] border-r border-[#d0d0d0] shrink-0" />
        <div className="flex-1 bg-[#f0f0f0] flex flex-col items-center">
          <span className="h-[47px] flex items-center">
            <Chev dir="up" />
          </span>
          <div className="w-full h-[752px] bg-[#cdcdcd]" />
          <span className="mt-auto h-[26px] flex items-center">
            <Chev dir="down" />
          </span>
        </div>
      </div>
      <div className="h-[29px] bg-[#f0f0f0] flex items-center justify-end pr-[15px] pb-[2px] shrink-0 font-['Liberation_Sans',sans-serif] text-[15.7px] tracking-normal [word-spacing:0] text-[#a3a3a3]">
        CSDN @kurtcolleen
      </div>
      <BoxDialog />
    </div>
  );
}
